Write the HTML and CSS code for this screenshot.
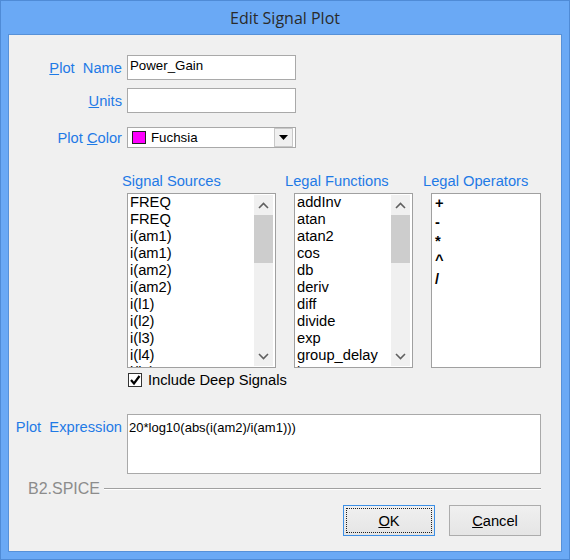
FILE: index.html
```html
<!DOCTYPE html>
<html>
<head lang="en">
    <meta charset="utf-8">
    <link rel="stylesheet" href="styles.css">
</head>
<body>

<div class="dialog">
    <div class="titleBar">Edit Signal Plot</div>

    <div class="client">
        <div class="fieldRow rowName">
            <label class="fieldLabel"><u>P</u>lot&nbsp; Name</label>
            <div class="textBox">Power_Gain</div>
        </div>
        <div class="fieldRow rowUnits">
            <label class="fieldLabel"><u>U</u>nits</label>
            <div class="textBox"></div>
        </div>
        <div class="fieldRow rowColor">
            <label class="fieldLabel">Plot <u>C</u>olor</label>
            <div class="comboBox">
                <span class="swatch"></span>
                <span class="comboText">Fuchsia</span>
                <span class="comboBtn">
                    <svg width="9" height="5" viewBox="0 0 9 5"><polygon points="0,0 9,0 4.5,5" fill="#000"/></svg>
                </span>
            </div>
        </div>

        <div class="listsRow">
            <div class="listCol colSources">
                <div class="listTitle">Signal Sources</div>
                <div class="listBox">
                    <div class="listItems">
                        <div>FREQ</div>
                        <div>FREQ</div>
                        <div>i(am1)</div>
                        <div>i(am1)</div>
                        <div>i(am2)</div>
                        <div>i(am2)</div>
                        <div>i(l1)</div>
                        <div>i(l2)</div>
                        <div>i(l3)</div>
                        <div>i(l4)</div>
                        <div>i(l5)</div>
                    </div>
                    <div class="scrollBar">
                        <div class="sbBtn"><svg width="11" height="7" viewBox="0 0 11 7"><polyline points="1,6 5.5,1.5 10,6" fill="none" stroke="#606060" stroke-width="1.6"/></svg></div>
                        <div class="sbThumb"></div>
                        <div class="sbTrack"></div>
                        <div class="sbBtn"><svg width="11" height="7" viewBox="0 0 11 7"><polyline points="1,1 5.5,5.5 10,1" fill="none" stroke="#606060" stroke-width="1.6"/></svg></div>
                    </div>
                </div>
            </div>
            <div class="listCol colFuncs">
                <div class="listTitle">Legal Functions</div>
                <div class="listBox">
                    <div class="listItems">
                        <div>addInv</div>
                        <div>atan</div>
                        <div>atan2</div>
                        <div>cos</div>
                        <div>db</div>
                        <div>deriv</div>
                        <div>diff</div>
                        <div>divide</div>
                        <div>exp</div>
                        <div>group_delay</div>
                        <div>imag</div>
                    </div>
                    <div class="scrollBar">
                        <div class="sbBtn"><svg width="11" height="7" viewBox="0 0 11 7"><polyline points="1,6 5.5,1.5 10,6" fill="none" stroke="#606060" stroke-width="1.6"/></svg></div>
                        <div class="sbThumb"></div>
                        <div class="sbTrack"></div>
                        <div class="sbBtn"><svg width="11" height="7" viewBox="0 0 11 7"><polyline points="1,1 5.5,5.5 10,1" fill="none" stroke="#606060" stroke-width="1.6"/></svg></div>
                    </div>
                </div>
            </div>
            <div class="listCol colOps">
                <div class="listTitle">Legal Operators</div>
                <div class="listBox">
                    <div class="listItems opItems">
                        <div>+</div>
                        <div>-</div>
                        <div>*</div>
                        <div>^</div>
                        <div>/</div>
                    </div>
                </div>
            </div>
        </div>

        <div class="checkRow">
            <span class="checkBox">
                <svg width="12" height="12" viewBox="0 0 12 12"><polyline points="2,6 5,9.5 10.5,2" fill="none" stroke="#000" stroke-width="2.2"/></svg>
            </span>
            <span>Include Deep Signals</span>
        </div>

        <div class="exprRow">
            <label class="fieldLabel exprLabel">Plot&nbsp; Expression</label>
            <div class="exprBox">20*log10(abs(i(am2)/i(am1)))</div>
        </div>

        <div class="brandRow">
            <span class="brand">B2.SPICE</span>
            <span class="brandLine"></span>
        </div>

        <div class="buttonRow">
            <span class="btn btnDefault"><span class="focusRect"><u>O</u>K</span></span>
            <span class="btn"><u>C</u>ancel</span>
        </div>
    </div>
</div>

</body>
</html>
```

FILE: styles.css
```css
body {
	margin: 0;
	font-family: "Liberation Sans", Arial, sans-serif;
}

.dialog {
	width: 570px;
	height: 560px;
	box-sizing: border-box;
	border: 1px solid #4f8bd6;
	background: #6aa9f5;
	display: flex;
	flex-direction: column;
}

.titleBar {
	height: 33px;
	display: flex;
	align-items: center;
	justify-content: center;
	font-family: "Open Sans", "Noto Sans", sans-serif;
	font-size: 16px;
	color: #2b2b2b;
}

.client {
	flex: 1;
	margin: 0 7px 7px 7px;
	border: 1px solid #5791d8;
	background: #f0f0f0;
	padding: 20px 20px 0 0;
	font-size: 14.7px;
}

.fieldRow {
	display: flex;
	align-items: center;
}
.rowUnits {
	margin-top: 8px;
}
.rowColor {
	margin-top: 14px;
}

.fieldLabel {
	width: 113px;
	margin-right: 5px;
	text-align: right;
	color: #1f7ae6;
	white-space: nowrap;
}

.textBox {
	width: 169px;
	height: 25px;
	box-sizing: border-box;
	border: 1px solid #a9a9a9;
	background: #fff;
	font-size: 13.3px;
	line-height: 17px;
	padding: 1px 2px;
}

.comboBox {
	width: 169px;
	height: 21px;
	box-sizing: border-box;
	border: 1px solid #a9a9a9;
	background: #fff;
	display: flex;
	align-items: center;
	font-size: 13.3px;
}
.swatch {
	width: 12px;
	height: 11px;
	margin-left: 4px;
	border: 1px solid #222;
	background: #ff00ff;
}
.comboText {
	flex: 1;
	margin-left: 5px;
}
.comboBtn {
	width: 17px;
	height: 17px;
	margin-right: 2px;
	border: 1px solid #c8c8c8;
	background: #f0f0f0;
	display: flex;
	align-items: center;
	justify-content: center;
}

/* three lists */
.listsRow {
	display: flex;
	margin-top: 25px;
	margin-left: 113px;
}
.listTitle {
	color: #1f7ae6;
	line-height: 17px;
	margin-bottom: 3px;
	white-space: nowrap;
}
.colSources {
	width: 154px;
	margin-right: 9px;
}
.colSources .listBox {
	margin-left: 5px;
}
.colFuncs {
	width: 128px;
	margin-right: 10px;
}
.colFuncs .listBox {
	margin-left: 9px;
}
.colOps {
	width: 118px;
}
.colOps .listBox {
	margin-left: 8px;
}

.listBox {
	height: 175px;
	box-sizing: border-box;
	border: 1px solid #a0a0a0;
	background: #fff;
	display: flex;
	overflow: hidden;
}
.listItems {
	flex: 1;
	padding-left: 2px;
	line-height: 17px;
	color: #000;
	overflow: hidden;
	white-space: nowrap;
}
.opItems {
	line-height: 19px;
	font-weight: bold;
	padding-left: 3px;
}

.scrollBar {
	width: 19px;
	margin: 1px 2px 1px 0;
	background: #f0f0f0;
	display: flex;
	flex-direction: column;
}
.sbBtn {
	height: 20px;
	display: flex;
	align-items: center;
	justify-content: center;
}
.sbThumb {
	height: 48px;
	background: #cdcdcd;
}
.sbTrack {
	flex: 1;
}

.checkRow {
	display: flex;
	align-items: center;
	margin-top: 3px;
	margin-left: 119px;
	height: 17px;
	gap: 6px;
}
.checkBox {
	width: 12px;
	height: 12px;
	border: 1px solid #333;
	background: #fff;
	display: flex;
}

.exprRow {
	display: flex;
	align-items: flex-start;
	margin-top: 26px;
}
.exprLabel {
	padding-top: 5px;
}
.exprBox {
	flex: 1;
	height: 60px;
	box-sizing: border-box;
	border: 1px solid #a9a9a9;
	background: #fff;
	font-size: 13px;
	line-height: 17px;
	padding: 4px 1px;
}

.brandRow {
	display: flex;
	align-items: center;
	margin-top: 6px;
	margin-left: 19px;
	height: 18px;
}
.brand {
	font-size: 16px;
	color: #8c8c8c;
}
.brandLine {
	flex: 1;
	margin-left: 4px;
	border-top: 1px solid #a0a0a0;
	border-bottom: 1px solid #fff;
}

.buttonRow {
	display: flex;
	justify-content: flex-end;
	gap: 14px;
	margin-top: 7px;
}
.btn {
	width: 92px;
	height: 31px;
	box-sizing: border-box;
	border: 1px solid #acacac;
	background: linear-gradient(#f0f0f0, #e5e5e5);
	display: flex;
	align-items: center;
	justify-content: center;
	color: #000;
}
.btnDefault {
	border-color: #3c8fe6;
	padding: 2px;
}
.focusRect {
	flex: 1;
	align-self: stretch;
	display: flex;
	align-items: center;
	justify-content: center;
	border: 1px dotted #222;
}
```
